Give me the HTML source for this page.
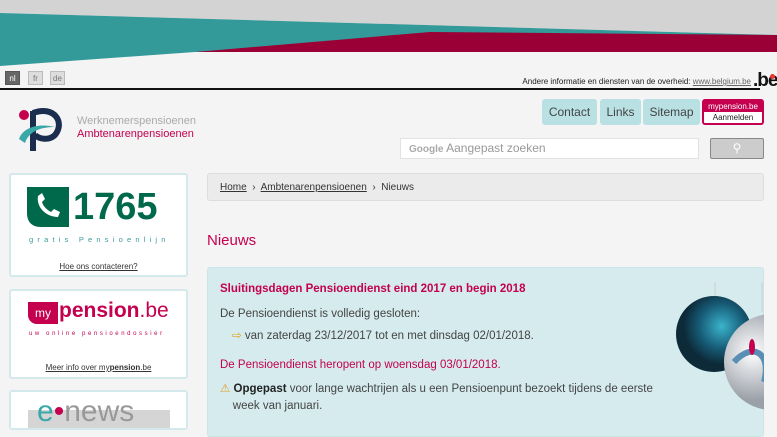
<!DOCTYPE html>
<html><head><meta charset="utf-8"><style>
*{margin:0;padding:0;box-sizing:border-box}
body{width:777px;height:423px;overflow:hidden;background:#f4f4f4;font-family:"Liberation Sans",sans-serif;position:relative;color:#333}
.a{position:absolute}
.lang{position:absolute;top:71px;width:15px;height:14px;font-size:8px;text-align:center;line-height:14px;border:1px solid #bbb;background:#ddd;color:#777}
.btn{position:absolute;top:99px;height:26px;background:#b9e0e3;border-radius:3px;font-size:12px;color:#444;text-align:center;line-height:26px}
.box{position:absolute;left:9px;width:179px;background:#fff;border:2px solid #d3e9ec;border-radius:3px}
</style></head><body>
<svg class="a" style="left:0;top:0" width="777" height="70">
<rect width="777" height="70" fill="#f4f4f4"/>
<polygon points="0,0 777,0 777,35 0,13" fill="#d3d3d3"/>
<polygon points="0,13 777,35 777,52 195,52 0,66" fill="#339a99"/>
<polygon points="195,52 430,32 777,35 777,52" fill="#9a0036"/>
</svg>
<div class="lang" style="left:5px;background:#666;color:#fff;border-color:#555">nl</div>
<div class="lang" style="left:28px">fr</div>
<div class="lang" style="left:50px">de</div>
<div class="a" style="right:26px;top:77px;font-size:8px;color:#222">Andere informatie en diensten van de overheid: <span style="color:#666;text-decoration:underline">www.belgium.be</span></div>
<div class="a" style="left:0;top:88px;width:760px;height:2px;background:#111"></div>
<div class="a" style="left:753px;top:70px;font-size:19px;font-weight:bold;color:#111;letter-spacing:-1px">.be</div>
<div class="a" style="left:770px;top:74px;width:5px;height:5px;background:#e33;border-radius:50%"></div>
<svg class="a" style="left:15px;top:105px" width="52" height="48">
<circle cx="9" cy="10" r="5" fill="#c4004f"/>
<path d="M18 6 V46" stroke="#1b2d4f" stroke-width="6"/>
<path d="M18 8 C40 0 50 18 40 30 C34 36 24 34 20 30" stroke="#1b2d4f" stroke-width="6" fill="none"/>
<path d="M4 34 C8 22 24 18 40 22 C26 22 14 26 10 38 Z" fill="#3aa7a9"/>
</svg>
<div class="a" style="left:77px;top:115px;font-size:11px;color:#aaa;line-height:13px">Werknemerspensioenen<br><span style="color:#c4004f">Ambtenarenpensioenen</span></div>
<div class="btn" style="left:542px;width:55px">Contact</div>
<div class="btn" style="left:600px;width:41px">Links</div>
<div class="btn" style="left:643px;width:57px">Sitemap</div>
<div class="a" style="left:702px;top:99px;width:62px;height:26px;border:2px solid #c4004f;border-radius:3px;background:#fff;font-size:8px;text-align:center">
<div style="background:#c4004f;color:#fff;height:11px;line-height:11px">mypension.be</div><div style="line-height:12px;color:#222">Aanmelden</div></div>
<div class="a" style="left:400px;top:138px;width:299px;height:21px;background:#fff;border:1px solid #e2e2e2;font-size:12px;color:#999;line-height:19px;padding-left:8px"><b style="font-size:10px;color:#aaa">Google</b> Aangepast zoeken</div>
<div class="a" style="left:710px;top:138px;width:54px;height:21px;background:#ccc;border:1px solid #888;border-radius:2px;color:#fff;text-align:center;font-size:12px;line-height:19px">&#9906;</div>
<div class="box" style="top:173px;height:104px">
<svg class="a" style="left:16px;top:12px" width="42" height="40"><path d="M0 0 H42 V40 H14 C4 40 0 34 0 26 Z" fill="#00694b"/><path d="M11 9 C9 20 19 30 31 30 L33 25 L27 22 L24 25 C20 23 16 19 15 15 L18 12 L15 6 Z" fill="#fff"/></svg>
<div class="a" style="left:62px;top:13px;font-size:38px;font-weight:bold;color:#00694b;line-height:38px">1765</div>
<div class="a" style="left:18px;top:60px;font-size:7.5px;color:#3c9a9a;letter-spacing:4.2px">gratis Pensioenlijn</div>
<div class="a" style="left:0;width:175px;top:87px;text-align:center;font-size:8px;text-decoration:underline">Hoe ons contacteren?</div>
</div>
<div class="box" style="top:289px;height:90px">
<div class="a" style="left:17px;top:11px;width:30px;height:22px;background:#c4004f;border-radius:0 0 0 9px;color:#fff;font-size:12px;line-height:22px;text-align:center">my</div>
<div class="a" style="left:48px;top:6px;font-size:21px;color:#c4004f;line-height:28px"><b>pension</b>.be</div>
<div class="a" style="left:18px;top:40px;font-size:6px;color:#c4004f;letter-spacing:2.6px">uw online pensioendossier</div>
<div class="a" style="left:0;width:175px;top:72px;text-align:center;font-size:8px;text-decoration:underline">Meer info over my<b>pension</b>.be</div>
</div>
<div class="box" style="top:390px;height:40px;overflow:hidden">
<div class="a" style="left:17px;top:18px;width:142px;height:20px;background:#d5d5d5"></div>
<div class="a" style="left:26px;top:4px;font-size:30px;color:#999;line-height:32px"><span style="color:#3aa7a9">e</span><span style="color:#c4004f">•</span>news</div>
</div>
<div class="a" style="left:207px;top:173px;width:557px;height:28px;background:#ebebeb;border:1px solid #ddd;border-radius:3px;font-size:10px;line-height:27px;padding-left:12px"><u>Home</u> &nbsp;›&nbsp; <u>Ambtenarenpensioenen</u> &nbsp;›&nbsp; Nieuws</div>
<div class="a" style="left:207px;top:232px;font-size:15px;color:#c4004f">Nieuws</div>
<div class="a" style="left:207px;top:267px;width:557px;height:170px;background:#d5ebee;border:1px solid #cde4e7;border-radius:3px"></div>
<svg class="a" style="left:672px;top:282px" width="92" height="130">
<defs><radialGradient id="g1" cx=".6" cy=".4"><stop offset="0" stop-color="#3bb3cc"/><stop offset=".6" stop-color="#165a75"/><stop offset="1" stop-color="#0d2a38"/></radialGradient>
<radialGradient id="g2" cx=".3" cy=".4"><stop offset="0" stop-color="#fff"/><stop offset="1" stop-color="#9aa0a8"/></radialGradient></defs>
<line x1="43" y1="0" x2="43" y2="15" stroke="#ccc"/><line x1="90" y1="0" x2="90" y2="30" stroke="#ccc"/>
<circle cx="42" cy="52" r="38" fill="url(#g1)"/>
<circle cx="100" cy="80" r="48" fill="url(#g2)"/><path d="M62 80 C80 60 100 70 92 100" stroke="#5a8fb5" stroke-width="6" fill="none"/>
<ellipse cx="80" cy="65" rx="3" ry="8" fill="#c4004f"/>
</svg>
<div class="a" style="left:220px;top:283px;font-size:11.5px;font-weight:bold;color:#c4004f">Sluitingsdagen Pensioendienst eind 2017 en begin 2018</div>
<div class="a" style="left:220px;top:308px;font-size:11.5px;color:#444">De Pensioendienst is volledig gesloten:</div>
<div class="a" style="left:232px;top:328px;font-size:11.5px;color:#444"><span style="color:#e0a020">⇨</span> van zaterdag 23/12/2017 tot en met dinsdag 02/01/2018.</div>
<div class="a" style="left:220px;top:359px;font-size:11.5px;color:#c4004f">De Pensioendienst heropent op woensdag 03/01/2018.</div>
<div class="a" style="left:220px;top:381px;font-size:11.5px;color:#444;line-height:17px"><span style="color:#e0a020">⚠</span> <b style="color:#222">Opgepast</b> voor lange wachtrijen als u een Pensioenpunt bezoekt tijdens de eerste<br>&nbsp;&nbsp;&nbsp;&nbsp;week van januari.</div>
</body></html>
